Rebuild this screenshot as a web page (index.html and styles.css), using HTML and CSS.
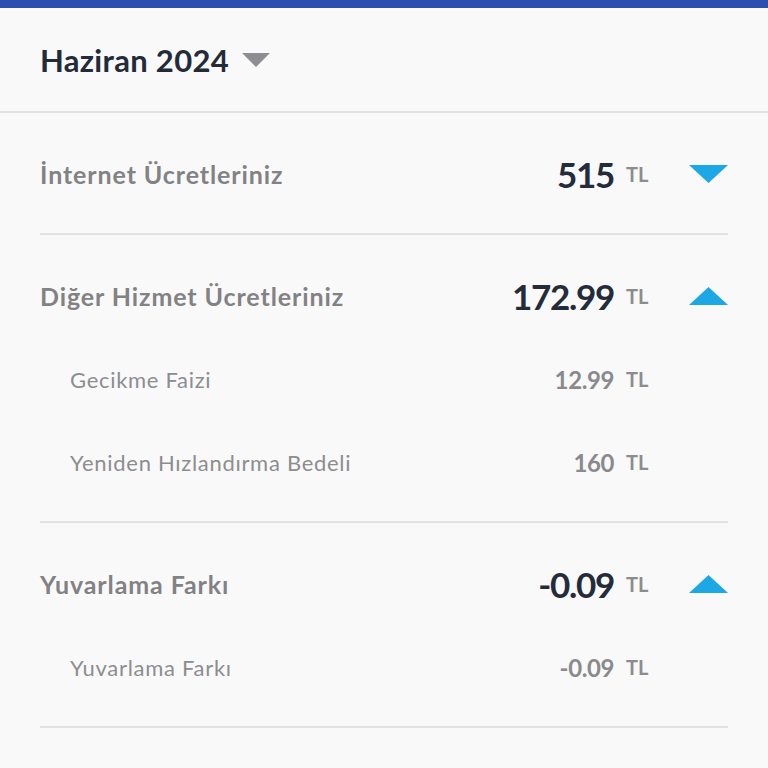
FILE: index.html
```html
<!DOCTYPE html>
<html lang="tr">
<head>
  <meta charset="UTF-8">
  <meta name="viewport" content="width=device-width, initial-scale=1.0">
  <title>Fatura Detayı</title>
  <link rel="stylesheet" href="styles.css">
</head>
<body>

  <div class="top-bar"></div>

  <!-- Month Selector -->
  <header class="month">
    <span class="month-name">Haziran 2024</span>
    <svg class="caret" width="28" height="14" viewBox="0 0 28 14"><polygon points="0,0 28,0 14,14"/></svg>
  </header>

  <!-- Bill Sections -->
  <main class="bill">

    <section class="group">
      <div class="row main-row">
        <span class="label">İnternet Ücretleriniz</span>
        <span class="amount">515</span>
        <span class="unit">TL</span>
        <span class="toggle">
          <svg width="39" height="18" viewBox="0 0 39 18"><polygon points="0,0 39,0 19.5,18"/></svg>
        </span>
      </div>
    </section>

    <section class="group">
      <div class="row main-row">
        <span class="label">Diğer Hizmet Ücretleriniz</span>
        <span class="amount">172.99</span>
        <span class="unit">TL</span>
        <span class="toggle">
          <svg width="39" height="18" viewBox="0 0 39 18"><polygon points="0,18 39,18 19.5,0"/></svg>
        </span>
      </div>
      <div class="row sub-row">
        <span class="label">Gecikme Faizi</span>
        <span class="amount">12.99</span>
        <span class="unit">TL</span>
        <span class="toggle"></span>
      </div>
      <div class="row sub-row">
        <span class="label">Yeniden Hızlandırma Bedeli</span>
        <span class="amount">160</span>
        <span class="unit">TL</span>
        <span class="toggle"></span>
      </div>
    </section>

    <section class="group">
      <div class="row main-row">
        <span class="label">Yuvarlama Farkı</span>
        <span class="amount">-0.09</span>
        <span class="unit">TL</span>
        <span class="toggle">
          <svg width="39" height="18" viewBox="0 0 39 18"><polygon points="0,18 39,18 19.5,0"/></svg>
        </span>
      </div>
      <div class="row sub-row">
        <span class="label">Yuvarlama Farkı</span>
        <span class="amount">-0.09</span>
        <span class="unit">TL</span>
        <span class="toggle"></span>
      </div>
    </section>

  </main>

</body>
</html>
```

FILE: styles.css
```css
body {
  font-family: Lato, "Noto Sans", sans-serif;
  margin: 0;
  padding: 0;
  background-color: #f9f9fa;
  color: #232b39;
}

.top-bar {
  height: 8px;
  background-color: #2d4eae;
}

/* Month selector */
.month {
  display: flex;
  align-items: center;
  height: 103px;
  padding: 0 40px;
  border-bottom: 2px solid #e2e2e4;
}

.month-name {
  font-size: 31px;
  font-weight: bold;
  letter-spacing: 0.3px;
}

.caret {
  margin-left: 13px;
  fill: #8e8e92;
}

/* Bill groups */
.bill {
  padding: 0 40px;
}

.group {
  padding: 40px 0 38px;
  border-bottom: 2px solid #e2e2e4;
}

.row {
  display: flex;
  align-items: center;
  height: 42px;
}

.sub-row {
  margin-top: 41px;
}

.label {
  flex: 1;
}

.main-row .label {
  font-size: 25px;
  font-weight: bold;
  letter-spacing: 0.9px;
  color: #828284;
}

.sub-row .label {
  padding-left: 30px;
  font-size: 22px;
  letter-spacing: 0.7px;
  color: #8d8d8f;
}

.amount {
  font-weight: bold;
  text-align: right;
}

.main-row .amount {
  font-size: 35px;
  letter-spacing: -1.3px;
  color: #242c3a;
}

.sub-row .amount {
  font-size: 24px;
  letter-spacing: -0.4px;
  color: #8a8a8c;
}

.unit {
  width: 22px;
  margin-left: 12px;
  font-size: 20px;
  font-weight: bold;
  color: #8c8c8e;
}

.toggle {
  display: flex;
  justify-content: flex-end;
  width: 80px;
}

.toggle svg {
  fill: #1ba8e5;
}
```
